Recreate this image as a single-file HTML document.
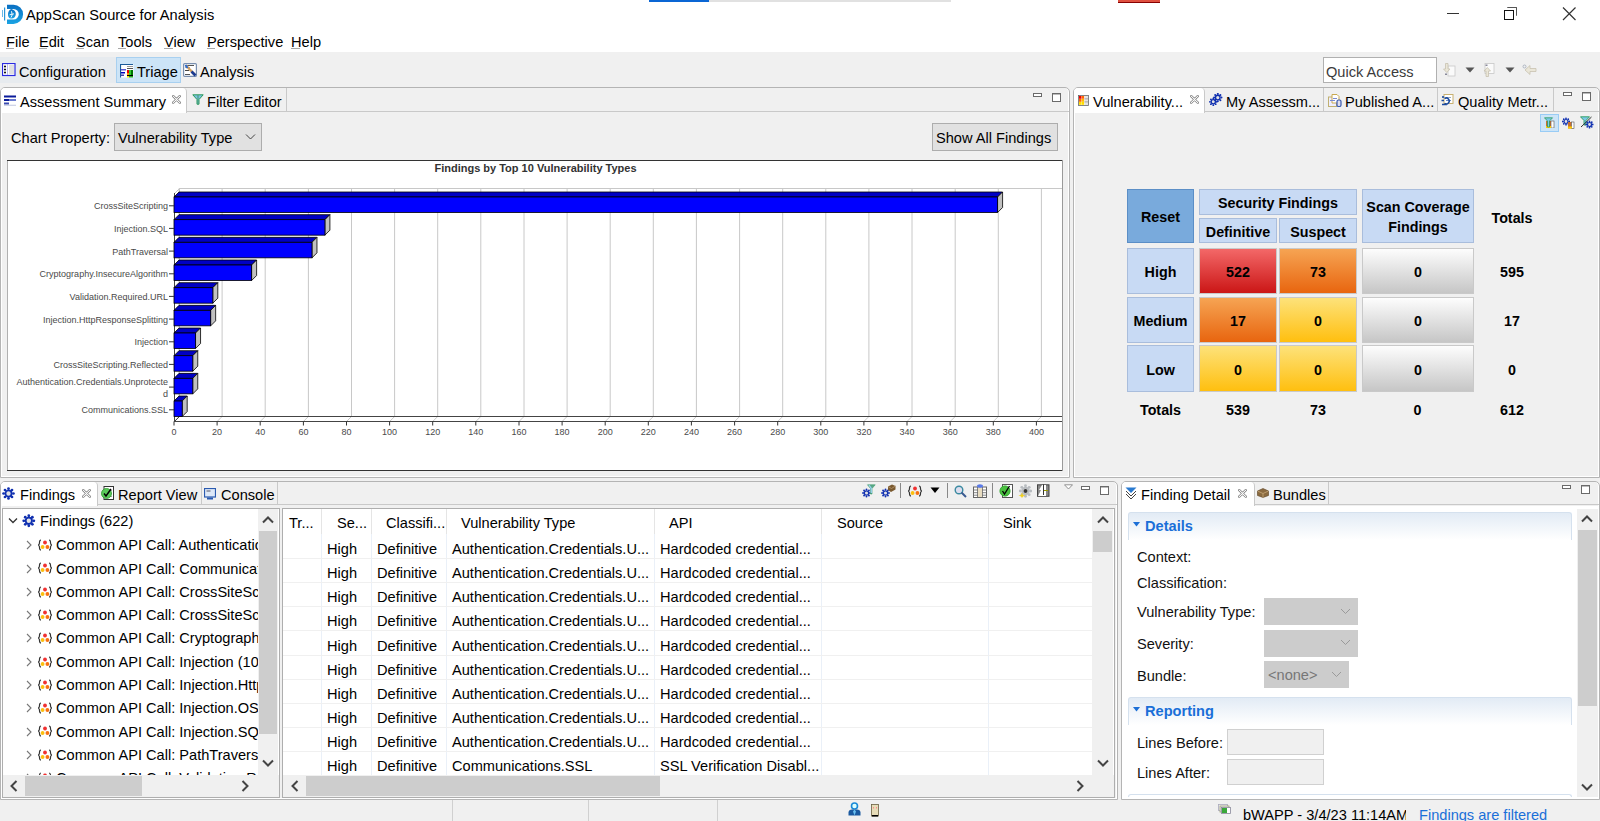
<!DOCTYPE html>
<html><head><meta charset="utf-8">
<style>
*{margin:0;padding:0;box-sizing:border-box}
html,body{width:1600px;height:821px;overflow:hidden;background:#f0f0f0;font-family:"Liberation Sans",sans-serif;font-size:14.6px;color:#000}
.a{position:absolute;white-space:nowrap}
.t{position:absolute;white-space:nowrap;line-height:18px}
.pan{position:absolute;border:1px solid #b4b4b4;border-radius:5px 5px 0 0;background:#f0f0f0;box-shadow:inset 1px 0 #fff,inset -1px 0 #fff,inset 0 -1px #fff}
.tabbar{position:absolute;left:0;right:0;top:0;height:24px;border-bottom:1px solid #c9c9c9}
.bt .tabbar{height:23px}
.bt .tab{height:23px}
.bt .tab.act{height:24px}
.bt .lbl{top:4px}
.tab{position:absolute;top:0;height:24px;border-right:1px solid #c9c9c9}
.tab.act{background:#fff;border-radius:4px 4px 0 0;height:25px}
.lbl{position:absolute;top:5px;white-space:nowrap;line-height:18px;font-size:14.6px}
.x{position:absolute;top:5px;font-size:12px;color:#9a9a9a}
.cell{position:absolute;border:1px solid #b8c6dc;text-align:center;font-weight:bold;font-size:14.3px;display:flex;align-items:center;justify-content:center;line-height:20px;padding-top:2px}
.hd{background:#c8daf4;border-color:#a9bddc}
.red{background:linear-gradient(#f36868,#cb1616);border-color:#c9c9c9}
.org{background:linear-gradient(#f6a453,#e8650f);border-color:#c9c9c9}
.yel{background:linear-gradient(#fde27a,#ffbf0f);border-color:#c9c9c9}
.gry{background:linear-gradient(#fdfdfd,#c6c6c6);border-color:#c9c9c9}
.tot{position:absolute;font-weight:bold;font-size:14.3px;text-align:center;line-height:20px;padding-top:1px}
.lab9{position:absolute;font-size:9px;color:#333;white-space:nowrap;line-height:10px}
.row{position:absolute;left:0;height:24px;border-bottom:1px solid #f0f0f0}
.tr{position:absolute;white-space:nowrap;font-size:14.6px;line-height:18px}
</style></head><body>

<!-- Title bar -->
<div class="a" style="left:0;top:0;width:1600px;height:52px;background:#fff"></div>
<div class="a" style="left:649px;top:0;width:60px;height:2px;background:#0a66d4"></div>
<div class="a" style="left:709px;top:0;width:242px;height:2px;background:#e1e1e1"></div>
<div class="a" style="left:1118px;top:0;width:42px;height:3px;background:#df5040;border-bottom:1px solid #800"></div>
<div class="t" style="left:26px;top:6px;font-size:14.6px;color:#000">AppScan Source for Analysis</div>
<div class="a" style="left:1447px;top:13px;width:12px;height:1px;background:#333"></div>
<div class="a" style="left:1507px;top:7px;width:10px;height:9px;border:1px solid #555;border-left:none;border-bottom:none;border-radius:1px"></div>
<div class="a" style="left:1504px;top:10px;width:10px;height:10px;border:1px solid #111;background:#fff"></div>
<svg class="a" style="left:1562px;top:7px" width="14" height="14" viewBox="0 0 14 14"><path d="M1 0.5 L13.5 13 M13.5 0.5 L1 13" stroke="#333" stroke-width="1.2"/></svg>

<!-- Menu -->
<div class="t" style="left:6px;top:32.7px">File</div>
<div class="t" style="left:39px;top:32.7px">Edit</div>
<div class="t" style="left:76px;top:32.7px">Scan</div>
<div class="t" style="left:118px;top:32.7px">Tools</div>
<div class="t" style="left:164px;top:32.7px">View</div>
<div class="t" style="left:207px;top:32.7px">Perspective</div>
<div class="t" style="left:291px;top:32.7px">Help</div>

<!-- Toolbar -->
<div class="a" style="left:0;top:57px;width:116px;height:26px;background:#e7ebef"></div>
<div class="a" style="left:116px;top:57px;width:65px;height:26px;background:#cce4f7;border:1px solid #a8d0f0"></div>
<div class="t" style="left:19px;top:63px">Configuration</div>
<div class="t" style="left:137px;top:63px">Triage</div>
<div class="t" style="left:200px;top:63px">Analysis</div>

<div class="a" style="left:1323px;top:57px;width:114px;height:26px;background:#fff;border:1px solid #b0b0b0"></div>
<div class="t" style="left:1326px;top:63px;color:#3b3b3b">Quick Access</div>

<!-- Top-left panel -->
<div class="pan" style="left:0;top:87px;width:1070px;height:391px">
 <div class="tabbar">
  <div class="tab act" style="left:0;width:186px"><div class="lbl" style="left:19px">Assessment Summary</div></div>
  <div class="tab" style="left:186px;width:100px"><div class="lbl" style="left:20px">Filter Editor</div></div>
 </div>
</div>

<!-- Top-right panel -->
<div class="pan" style="left:1073px;top:87px;width:527px;height:391px">
 <div class="tabbar">
  <div class="tab act" style="left:0;width:131px"><div class="lbl" style="left:19px">Vulnerability...</div></div>
  <div class="tab" style="left:131px;width:119px"><div class="lbl" style="left:21px">My Assessm...</div></div>
  <div class="tab" style="left:250px;width:114px"><div class="lbl" style="left:21px">Published A...</div></div>
  <div class="tab" style="left:364px;width:116px"><div class="lbl" style="left:20px">Quality Metr...</div></div>
 </div>
</div>

<!-- Bottom-left panel -->
<div class="pan bt" style="left:0;top:481px;width:1118px;height:319px">
 <div class="tabbar">
  <div class="tab act" style="left:0;width:97px"><div class="lbl" style="left:19px">Findings</div></div>
  <div class="tab" style="left:97px;width:104px"><div class="lbl" style="left:20px">Report View</div></div>
  <div class="tab" style="left:201px;width:76px"><div class="lbl" style="left:19px">Console</div></div>
 </div>
</div>

<!-- Bottom-right panel -->
<div class="pan bt" style="left:1121px;top:481px;width:479px;height:319px">
 <div class="tabbar">
  <div class="tab act" style="left:0;width:133px"><div class="lbl" style="left:19px">Finding Detail</div></div>
  <div class="tab" style="left:133px;width:74px"><div class="lbl" style="left:18px">Bundles</div></div>
 </div>
</div>

<svg class="a" style="left:0;top:0" width="1600" height="821" viewBox="0 0 1600 821">
<rect x="7" y="160" width="1056" height="311" fill="#fff"/>
<path d="M7.5 160.5V471" stroke="#b0b0b0" stroke-width="1"/>
<path d="M7 160.5H1063" stroke="#333" stroke-width="1"/>
<path d="M7 470.5H1063" stroke="#333" stroke-width="1"/>
<path d="M1062.5 160V471" stroke="#9a9a9a" stroke-width="1"/>
<text x="535.5" y="171.5" font-family="Liberation Sans" font-size="11" font-weight="bold" fill="#333" text-anchor="middle">Findings by Top 10 Vulnerability Types</text>
<path d="M179.0 188.5V416.5 M179.0 416.5L174.0 421.5 M222.1 188.5V416.5 M222.1 416.5L217.1 421.5 M265.2 188.5V416.5 M265.2 416.5L260.2 421.5 M308.4 188.5V416.5 M308.4 416.5L303.4 421.5 M351.5 188.5V416.5 M351.5 416.5L346.5 421.5 M394.6 188.5V416.5 M394.6 416.5L389.6 421.5 M437.7 188.5V416.5 M437.7 416.5L432.7 421.5 M480.8 188.5V416.5 M480.8 416.5L475.8 421.5 M524.0 188.5V416.5 M524.0 416.5L519.0 421.5 M567.1 188.5V416.5 M567.1 416.5L562.1 421.5 M610.2 188.5V416.5 M610.2 416.5L605.2 421.5 M653.3 188.5V416.5 M653.3 416.5L648.3 421.5 M696.4 188.5V416.5 M696.4 416.5L691.4 421.5 M739.6 188.5V416.5 M739.6 416.5L734.6 421.5 M782.7 188.5V416.5 M782.7 416.5L777.7 421.5 M825.8 188.5V416.5 M825.8 416.5L820.8 421.5 M868.9 188.5V416.5 M868.9 416.5L863.9 421.5 M912.0 188.5V416.5 M912.0 416.5L907.0 421.5 M955.2 188.5V416.5 M955.2 416.5L950.2 421.5 M998.3 188.5V416.5 M998.3 416.5L993.3 421.5 M1041.4 188.5V416.5 M1041.4 416.5L1036.4 421.5" stroke="#c8c8c8" stroke-width="1" fill="none"/>
<path d="M179 188.5H1062" stroke="#c8c8c8" stroke-width="1"/>
<path d="M179.5 188.5V416.5 M174.5 193.5L179.5 188.5" stroke="#c8c8c8" stroke-width="1" fill="none"/>
<path d="M179 416.5H1062 M174 421.5H1062 M174.5 193V422 M174.5 421.5L179.5 416.5" stroke="#444" stroke-width="1" fill="none"/>
<path d="M174.0 421.5V425.5 M217.1 421.5V425.5 M260.2 421.5V425.5 M303.4 421.5V425.5 M346.5 421.5V425.5 M389.6 421.5V425.5 M432.7 421.5V425.5 M475.8 421.5V425.5 M519.0 421.5V425.5 M562.1 421.5V425.5 M605.2 421.5V425.5 M648.3 421.5V425.5 M691.4 421.5V425.5 M734.6 421.5V425.5 M777.7 421.5V425.5 M820.8 421.5V425.5 M863.9 421.5V425.5 M907.0 421.5V425.5 M950.2 421.5V425.5 M993.3 421.5V425.5 M1036.4 421.5V425.5" stroke="#333" stroke-width="1"/>
<g font-family="Liberation Sans" font-size="9" fill="#4a4a4a"><text x="174.0" y="435" text-anchor="middle">0</text><text x="217.1" y="435" text-anchor="middle">20</text><text x="260.2" y="435" text-anchor="middle">40</text><text x="303.4" y="435" text-anchor="middle">60</text><text x="346.5" y="435" text-anchor="middle">80</text><text x="389.6" y="435" text-anchor="middle">100</text><text x="432.7" y="435" text-anchor="middle">120</text><text x="475.8" y="435" text-anchor="middle">140</text><text x="519.0" y="435" text-anchor="middle">160</text><text x="562.1" y="435" text-anchor="middle">180</text><text x="605.2" y="435" text-anchor="middle">200</text><text x="648.3" y="435" text-anchor="middle">220</text><text x="691.4" y="435" text-anchor="middle">240</text><text x="734.6" y="435" text-anchor="middle">260</text><text x="777.7" y="435" text-anchor="middle">280</text><text x="820.8" y="435" text-anchor="middle">300</text><text x="863.9" y="435" text-anchor="middle">320</text><text x="907.0" y="435" text-anchor="middle">340</text><text x="950.2" y="435" text-anchor="middle">360</text><text x="993.3" y="435" text-anchor="middle">380</text><text x="1036.4" y="435" text-anchor="middle">400</text></g>
<path d="M174 197.00L179 192.00H1002.59L997.59 197.00Z" fill="#0000c4" stroke="#000" stroke-width="0.8"/><path d="M997.59 197.00L1002.59 192.00V207.50L997.59 212.50Z" fill="#c0c0c0" stroke="#000" stroke-width="0.8"/><rect x="174" y="197.00" width="823.59" height="15.5" fill="#0000ff" stroke="#000" stroke-width="0.8"/><path d="M174 219.67L179 214.67H329.92L324.92 219.67Z" fill="#0000c4" stroke="#000" stroke-width="0.8"/><path d="M324.92 219.67L329.92 214.67V230.17L324.92 235.17Z" fill="#c0c0c0" stroke="#000" stroke-width="0.8"/><rect x="174" y="219.67" width="150.92" height="15.5" fill="#0000ff" stroke="#000" stroke-width="0.8"/><path d="M174 242.34L179 237.34H316.98L311.98 242.34Z" fill="#0000c4" stroke="#000" stroke-width="0.8"/><path d="M311.98 242.34L316.98 237.34V252.84L311.98 257.84Z" fill="#c0c0c0" stroke="#000" stroke-width="0.8"/><rect x="174" y="242.34" width="137.98" height="15.5" fill="#0000ff" stroke="#000" stroke-width="0.8"/><path d="M174 265.01L179 260.01H256.62L251.62 265.01Z" fill="#0000c4" stroke="#000" stroke-width="0.8"/><path d="M251.62 265.01L256.62 260.01V275.51L251.62 280.51Z" fill="#c0c0c0" stroke="#000" stroke-width="0.8"/><rect x="174" y="265.01" width="77.62" height="15.5" fill="#0000ff" stroke="#000" stroke-width="0.8"/><path d="M174 287.68L179 282.68H217.81L212.81 287.68Z" fill="#0000c4" stroke="#000" stroke-width="0.8"/><path d="M212.81 287.68L217.81 282.68V298.18L212.81 303.18Z" fill="#c0c0c0" stroke="#000" stroke-width="0.8"/><rect x="174" y="287.68" width="38.81" height="15.5" fill="#0000ff" stroke="#000" stroke-width="0.8"/><path d="M174 310.35L179 305.35H215.65L210.65 310.35Z" fill="#0000c4" stroke="#000" stroke-width="0.8"/><path d="M210.65 310.35L215.65 305.35V320.85L210.65 325.85Z" fill="#c0c0c0" stroke="#000" stroke-width="0.8"/><rect x="174" y="310.35" width="36.65" height="15.5" fill="#0000ff" stroke="#000" stroke-width="0.8"/><path d="M174 333.02L179 328.02H200.56L195.56 333.02Z" fill="#0000c4" stroke="#000" stroke-width="0.8"/><path d="M195.56 333.02L200.56 328.02V343.52L195.56 348.52Z" fill="#c0c0c0" stroke="#000" stroke-width="0.8"/><rect x="174" y="333.02" width="21.56" height="15.5" fill="#0000ff" stroke="#000" stroke-width="0.8"/><path d="M174 355.69L179 350.69H197.76L192.76 355.69Z" fill="#0000c4" stroke="#000" stroke-width="0.8"/><path d="M192.76 355.69L197.76 350.69V366.19L192.76 371.19Z" fill="#c0c0c0" stroke="#000" stroke-width="0.8"/><rect x="174" y="355.69" width="18.76" height="15.5" fill="#0000ff" stroke="#000" stroke-width="0.8"/><path d="M174 378.36L179 373.36H197.76L192.76 378.36Z" fill="#0000c4" stroke="#000" stroke-width="0.8"/><path d="M192.76 378.36L197.76 373.36V388.86L192.76 393.86Z" fill="#c0c0c0" stroke="#000" stroke-width="0.8"/><rect x="174" y="378.36" width="18.76" height="15.5" fill="#0000ff" stroke="#000" stroke-width="0.8"/><path d="M174 401.03L179 396.03H187.19L182.19 401.03Z" fill="#0000c4" stroke="#000" stroke-width="0.8"/><path d="M182.19 401.03L187.19 396.03V411.53L182.19 416.53Z" fill="#c0c0c0" stroke="#000" stroke-width="0.8"/><rect x="174" y="401.03" width="8.19" height="15.5" fill="#0000ff" stroke="#000" stroke-width="0.8"/>
<path d="M169 205.8H174 M169 228.4H174 M169 251.1H174 M169 273.8H174 M169 296.4H174 M169 319.1H174 M169 341.8H174 M169 364.4H174 M169 387.1H174 M169 409.8H174" stroke="#333" stroke-width="1"/>
<g font-family="Liberation Sans" font-size="9" fill="#4a4a4a"><text x="168" y="209.2" text-anchor="end">CrossSiteScripting</text><text x="168" y="231.9" text-anchor="end">Injection.SQL</text><text x="168" y="254.6" text-anchor="end">PathTraversal</text><text x="168" y="277.3" text-anchor="end">Cryptography.InsecureAlgorithm</text><text x="168" y="299.9" text-anchor="end">Validation.Required.URL</text><text x="168" y="322.6" text-anchor="end">Injection.HttpResponseSplitting</text><text x="168" y="345.3" text-anchor="end">Injection</text><text x="168" y="367.9" text-anchor="end">CrossSiteScripting.Reflected</text><text x="168" y="384.6" text-anchor="end">Authentication.Credentials.Unprotecte</text><text x="168" y="397.1" text-anchor="end">d</text><text x="168" y="413.3" text-anchor="end">Communications.SSL</text></g>
</svg>
<div class="t" style="left:11px;top:129px">Chart Property:</div>
<div class="a" style="left:114px;top:123px;width:148px;height:28px;background:#e1e1e1;border:1px solid #adadad"></div>
<div class="t" style="left:118px;top:129px">Vulnerability Type</div>
<svg class="a" style="left:245px;top:133px" width="11" height="8"><path d="M1 1.5L5.5 6L10 1.5" stroke="#444" stroke-width="1" fill="none"/></svg>
<div class="a" style="left:932px;top:123px;width:126px;height:28px;background:#e1e1e1;border:1px solid #adadad"></div>
<div class="t" style="left:936px;top:129px">Show All Findings</div>
<div class="a" style="left:1033px;top:93px;width:9px;height:4px;border:1px solid #6a6a6a;background:#fff"></div>
<div class="a" style="left:1052px;top:93px;width:9px;height:9px;border:1px solid #6a6a6a;background:#fff;box-shadow:inset 0 1px 0 #bbb"></div>
<div class="a" style="left:1563px;top:92px;width:9px;height:4px;border:1px solid #6a6a6a;background:#fff"></div>
<div class="a" style="left:1582px;top:92px;width:9px;height:9px;border:1px solid #6a6a6a;background:#fff;box-shadow:inset 0 1px 0 #bbb"></div>
<div class="a" style="left:1081px;top:486px;width:9px;height:4px;border:1px solid #6a6a6a;background:#fff"></div>
<div class="a" style="left:1100px;top:486px;width:9px;height:9px;border:1px solid #6a6a6a;background:#fff;box-shadow:inset 0 1px 0 #bbb"></div>
<div class="a" style="left:1562px;top:485px;width:9px;height:4px;border:1px solid #6a6a6a;background:#fff"></div>
<div class="a" style="left:1581px;top:485px;width:9px;height:9px;border:1px solid #6a6a6a;background:#fff;box-shadow:inset 0 1px 0 #bbb"></div>
<div class="cell hd" style="left:1127px;top:189px;width:67px;height:54px;background:#79aadc;border-color:#5b8ec6">Reset</div>
<div class="cell hd" style="left:1199px;top:189px;width:158px;height:26px;">Security Findings</div>
<div class="cell hd" style="left:1199px;top:218px;width:78px;height:25px;">Definitive</div>
<div class="cell hd" style="left:1279px;top:218px;width:78px;height:25px;">Suspect</div>
<div class="cell hd" style="left:1362px;top:189px;width:112px;height:54px;">Scan Coverage<br>Findings</div>
<div class="tot" style="left:1472px;top:207px;width:80px">Totals</div>
<div class="cell hd" style="left:1127px;top:248px;width:67px;height:46px;">High</div>
<div class="cell red" style="left:1199px;top:248px;width:78px;height:46px;">522</div>
<div class="cell org" style="left:1279px;top:248px;width:78px;height:46px;">73</div>
<div class="cell gry" style="left:1362px;top:248px;width:112px;height:46px;">0</div>
<div class="tot" style="left:1472px;top:261.0px;width:80px">595</div>
<div class="cell hd" style="left:1127px;top:297px;width:67px;height:46px;">Medium</div>
<div class="cell org" style="left:1199px;top:297px;width:78px;height:46px;">17</div>
<div class="cell yel" style="left:1279px;top:297px;width:78px;height:46px;">0</div>
<div class="cell gry" style="left:1362px;top:297px;width:112px;height:46px;">0</div>
<div class="tot" style="left:1472px;top:310.0px;width:80px">17</div>
<div class="cell hd" style="left:1127px;top:345px;width:67px;height:47px;">Low</div>
<div class="cell yel" style="left:1199px;top:345px;width:78px;height:47px;">0</div>
<div class="cell yel" style="left:1279px;top:345px;width:78px;height:47px;">0</div>
<div class="cell gry" style="left:1362px;top:345px;width:112px;height:47px;">0</div>
<div class="tot" style="left:1472px;top:358.5px;width:80px">0</div>
<div class="tot" style="left:1127px;top:399px;width:67px">Totals</div>
<div class="tot" style="left:1199px;top:399px;width:78px">539</div>
<div class="tot" style="left:1279px;top:399px;width:78px">73</div>
<div class="tot" style="left:1361px;top:399px;width:113px">0</div>
<div class="tot" style="left:1472px;top:399px;width:80px">612</div>
<div class="a" style="left:2px;top:508px;width:278px;height:290px;background:#fff;border:1px solid #aeaeae"></div>
<div class="a" style="left:258px;top:509px;width:20px;height:266px;background:#f0f0f0"></div>
<div class="a" style="left:259px;top:531px;width:18px;height:203px;background:#cdcdcd"></div>
<div class="a" style="left:3px;top:775px;width:276px;height:22px;background:#f0f0f0"></div>
<div class="a" style="left:25px;top:776px;width:117px;height:20px;background:#cdcdcd"></div>
<svg class="a" style="left:262px;top:516px" width="12" height="8"><path d="M1 6.5L6 1.5L11 6.5" stroke="#444" stroke-width="2" fill="none"/></svg>
<svg class="a" style="left:262px;top:759px" width="12" height="8"><path d="M1 1.5L6 6.5L11 1.5" stroke="#444" stroke-width="2" fill="none"/></svg>
<svg class="a" style="left:10px;top:780px" width="8" height="12"><path d="M6.5 1L1.5 6L6.5 11" stroke="#444" stroke-width="2" fill="none"/></svg>
<svg class="a" style="left:241px;top:780px" width="8" height="12"><path d="M1.5 1L6.5 6L1.5 11" stroke="#444" stroke-width="2" fill="none"/></svg>
<div class="a" style="left:3px;top:509px;width:255px;height:266px;overflow:hidden">
<svg class="a" style="left:5px;top:8px" width="10" height="8"><path d="M1 1.5L5 5.5L9 1.5" stroke="#333" stroke-width="1.3" fill="none"/></svg>
<div class="tr" style="left:37px;top:3px">Findings (622)</div>
<svg class="a" style="left:23px;top:31.2px" width="6" height="10"><path d="M1 1L5 5L1 9" stroke="#777" stroke-width="1.1" fill="none"/></svg>
<div class="tr" style="left:53px;top:27.2px">Common API Call: Authentication.Credentials.Unprotected</div>
<svg class="a" style="left:23px;top:54.5px" width="6" height="10"><path d="M1 1L5 5L1 9" stroke="#777" stroke-width="1.1" fill="none"/></svg>
<div class="tr" style="left:53px;top:50.5px">Common API Call: Communications.SSL</div>
<svg class="a" style="left:23px;top:77.8px" width="6" height="10"><path d="M1 1L5 5L1 9" stroke="#777" stroke-width="1.1" fill="none"/></svg>
<div class="tr" style="left:53px;top:73.8px">Common API Call: CrossSiteScripting</div>
<svg class="a" style="left:23px;top:101.1px" width="6" height="10"><path d="M1 1L5 5L1 9" stroke="#777" stroke-width="1.1" fill="none"/></svg>
<div class="tr" style="left:53px;top:97.1px">Common API Call: CrossSiteScripting.Reflected</div>
<svg class="a" style="left:23px;top:124.4px" width="6" height="10"><path d="M1 1L5 5L1 9" stroke="#777" stroke-width="1.1" fill="none"/></svg>
<div class="tr" style="left:53px;top:120.4px">Common API Call: Cryptography.InsecureAlgorithm</div>
<svg class="a" style="left:23px;top:147.7px" width="6" height="10"><path d="M1 1L5 5L1 9" stroke="#777" stroke-width="1.1" fill="none"/></svg>
<div class="tr" style="left:53px;top:143.7px">Common API Call: Injection (10)</div>
<svg class="a" style="left:23px;top:171.0px" width="6" height="10"><path d="M1 1L5 5L1 9" stroke="#777" stroke-width="1.1" fill="none"/></svg>
<div class="tr" style="left:53px;top:167.0px">Common API Call: Injection.HttpResponseSplitting</div>
<svg class="a" style="left:23px;top:194.3px" width="6" height="10"><path d="M1 1L5 5L1 9" stroke="#777" stroke-width="1.1" fill="none"/></svg>
<div class="tr" style="left:53px;top:190.3px">Common API Call: Injection.OSCommand</div>
<svg class="a" style="left:23px;top:217.6px" width="6" height="10"><path d="M1 1L5 5L1 9" stroke="#777" stroke-width="1.1" fill="none"/></svg>
<div class="tr" style="left:53px;top:213.6px">Common API Call: Injection.SQL</div>
<svg class="a" style="left:23px;top:240.9px" width="6" height="10"><path d="M1 1L5 5L1 9" stroke="#777" stroke-width="1.1" fill="none"/></svg>
<div class="tr" style="left:53px;top:236.9px">Common API Call: PathTraversal</div>
<svg class="a" style="left:23px;top:264.2px" width="6" height="10"><path d="M1 1L5 5L1 9" stroke="#777" stroke-width="1.1" fill="none"/></svg>
<div class="tr" style="left:53px;top:260.2px">Common API Call: Validation.Required.URL</div>
</div>
<div class="a" style="left:282px;top:508px;width:833px;height:290px;background:#fff;border:1px solid #aeaeae"></div>
<div class="a" style="left:283px;top:509px;width:831px;height:288px;overflow:hidden">
<div class="a" style="left:38px;top:0;width:1px;height:25px;background:#e5e5e5"></div>
<div class="a" style="left:38px;top:25px;width:1px;height:241px;background:#eaf0f8"></div>
<div class="a" style="left:88px;top:0;width:1px;height:25px;background:#e5e5e5"></div>
<div class="a" style="left:88px;top:25px;width:1px;height:241px;background:#eaf0f8"></div>
<div class="a" style="left:163px;top:0;width:1px;height:25px;background:#e5e5e5"></div>
<div class="a" style="left:163px;top:25px;width:1px;height:241px;background:#eaf0f8"></div>
<div class="a" style="left:371px;top:0;width:1px;height:25px;background:#e5e5e5"></div>
<div class="a" style="left:371px;top:25px;width:1px;height:241px;background:#eaf0f8"></div>
<div class="a" style="left:538px;top:0;width:1px;height:25px;background:#e5e5e5"></div>
<div class="a" style="left:538px;top:25px;width:1px;height:241px;background:#eaf0f8"></div>
<div class="a" style="left:705px;top:0;width:1px;height:25px;background:#e5e5e5"></div>
<div class="a" style="left:705px;top:25px;width:1px;height:241px;background:#eaf0f8"></div>
<div class="a" style="left:0;top:49.0px;width:809px;height:1px;background:#f0f0f0"></div>
<div class="a" style="left:0;top:73.2px;width:809px;height:1px;background:#f0f0f0"></div>
<div class="a" style="left:0;top:97.3px;width:809px;height:1px;background:#f0f0f0"></div>
<div class="a" style="left:0;top:121.4px;width:809px;height:1px;background:#f0f0f0"></div>
<div class="a" style="left:0;top:145.6px;width:809px;height:1px;background:#f0f0f0"></div>
<div class="a" style="left:0;top:169.8px;width:809px;height:1px;background:#f0f0f0"></div>
<div class="a" style="left:0;top:193.9px;width:809px;height:1px;background:#f0f0f0"></div>
<div class="a" style="left:0;top:218.0px;width:809px;height:1px;background:#f0f0f0"></div>
<div class="a" style="left:0;top:242.2px;width:809px;height:1px;background:#f0f0f0"></div>
<div class="a" style="left:0;top:266.4px;width:809px;height:1px;background:#f0f0f0"></div>
<div class="a" style="left:0;top:290.5px;width:809px;height:1px;background:#f0f0f0"></div>
<div class="tr" style="left:6px;top:5px">Tr...</div>
<div class="tr" style="left:54px;top:5px">Se...</div>
<div class="tr" style="left:103px;top:5px">Classifi...</div>
<div class="tr" style="left:178px;top:5px">Vulnerability Type</div>
<div class="tr" style="left:386px;top:5px">API</div>
<div class="tr" style="left:554px;top:5px">Source</div>
<div class="tr" style="left:720px;top:5px">Sink</div>
<div class="tr" style="left:44px;top:31.0px">High</div>
<div class="tr" style="left:94px;top:31.0px">Definitive</div>
<div class="tr" style="left:169px;top:31.0px">Authentication.Credentials.U...</div>
<div class="tr" style="left:377px;top:31.0px">Hardcoded credential...</div>
<div class="tr" style="left:44px;top:55.1px">High</div>
<div class="tr" style="left:94px;top:55.1px">Definitive</div>
<div class="tr" style="left:169px;top:55.1px">Authentication.Credentials.U...</div>
<div class="tr" style="left:377px;top:55.1px">Hardcoded credential...</div>
<div class="tr" style="left:44px;top:79.3px">High</div>
<div class="tr" style="left:94px;top:79.3px">Definitive</div>
<div class="tr" style="left:169px;top:79.3px">Authentication.Credentials.U...</div>
<div class="tr" style="left:377px;top:79.3px">Hardcoded credential...</div>
<div class="tr" style="left:44px;top:103.4px">High</div>
<div class="tr" style="left:94px;top:103.4px">Definitive</div>
<div class="tr" style="left:169px;top:103.4px">Authentication.Credentials.U...</div>
<div class="tr" style="left:377px;top:103.4px">Hardcoded credential...</div>
<div class="tr" style="left:44px;top:127.6px">High</div>
<div class="tr" style="left:94px;top:127.6px">Definitive</div>
<div class="tr" style="left:169px;top:127.6px">Authentication.Credentials.U...</div>
<div class="tr" style="left:377px;top:127.6px">Hardcoded credential...</div>
<div class="tr" style="left:44px;top:151.8px">High</div>
<div class="tr" style="left:94px;top:151.8px">Definitive</div>
<div class="tr" style="left:169px;top:151.8px">Authentication.Credentials.U...</div>
<div class="tr" style="left:377px;top:151.8px">Hardcoded credential...</div>
<div class="tr" style="left:44px;top:175.9px">High</div>
<div class="tr" style="left:94px;top:175.9px">Definitive</div>
<div class="tr" style="left:169px;top:175.9px">Authentication.Credentials.U...</div>
<div class="tr" style="left:377px;top:175.9px">Hardcoded credential...</div>
<div class="tr" style="left:44px;top:200.0px">High</div>
<div class="tr" style="left:94px;top:200.0px">Definitive</div>
<div class="tr" style="left:169px;top:200.0px">Authentication.Credentials.U...</div>
<div class="tr" style="left:377px;top:200.0px">Hardcoded credential...</div>
<div class="tr" style="left:44px;top:224.2px">High</div>
<div class="tr" style="left:94px;top:224.2px">Definitive</div>
<div class="tr" style="left:169px;top:224.2px">Authentication.Credentials.U...</div>
<div class="tr" style="left:377px;top:224.2px">Hardcoded credential...</div>
<div class="tr" style="left:44px;top:248.3px">High</div>
<div class="tr" style="left:94px;top:248.3px">Definitive</div>
<div class="tr" style="left:169px;top:248.3px">Communications.SSL</div>
<div class="tr" style="left:377px;top:248.3px">SSL Verification Disabl...</div>
</div>
<div class="a" style="left:1092px;top:509px;width:21px;height:266px;background:#f0f0f0"></div>
<div class="a" style="left:1093px;top:531px;width:19px;height:21px;background:#cdcdcd"></div>
<svg class="a" style="left:1097px;top:516px" width="12" height="8"><path d="M1 6.5L6 1.5L11 6.5" stroke="#444" stroke-width="2" fill="none"/></svg>
<svg class="a" style="left:1097px;top:759px" width="12" height="8"><path d="M1 1.5L6 6.5L11 1.5" stroke="#444" stroke-width="2" fill="none"/></svg>
<div class="a" style="left:283px;top:775px;width:831px;height:22px;background:#f0f0f0"></div>
<div class="a" style="left:306px;top:776px;width:354px;height:20px;background:#cdcdcd"></div>
<svg class="a" style="left:291px;top:780px" width="8" height="12"><path d="M6.5 1L1.5 6L6.5 11" stroke="#444" stroke-width="2" fill="none"/></svg>
<svg class="a" style="left:1076px;top:780px" width="8" height="12"><path d="M1.5 1L6.5 6L1.5 11" stroke="#444" stroke-width="2" fill="none"/></svg>
<div class="a" style="left:1122px;top:506px;width:477px;height:292px;background:#fff"></div>
<div class="a" style="left:1577px;top:509px;width:21px;height:288px;background:#f0f0f0"></div>
<div class="a" style="left:1578px;top:530px;width:19px;height:176px;background:#cdcdcd"></div>
<svg class="a" style="left:1581px;top:515px" width="12" height="8"><path d="M1 6.5L6 1.5L11 6.5" stroke="#444" stroke-width="2" fill="none"/></svg>
<svg class="a" style="left:1581px;top:783px" width="12" height="8"><path d="M1 1.5L6 6.5L11 1.5" stroke="#444" stroke-width="2" fill="none"/></svg>
<div class="a" style="left:1128px;top:512px;width:444px;height:28px;border:1px solid #d5e1ee;border-bottom:none;border-radius:3px 3px 0 0;background:linear-gradient(#e2ebf5,#fff)"></div>
<svg class="a" style="left:1133px;top:522px" width="8" height="6"><path d="M0 0H7L3.5 4.5Z" fill="#1c6fd6"/></svg>
<div class="tr" style="left:1145px;top:517px;color:#1a6fd8;font-weight:bold">Details</div>
<div class="tr" style="left:1137px;top:548px;color:#111">Context:</div>
<div class="tr" style="left:1137px;top:574px;color:#111">Classification:</div>
<div class="tr" style="left:1137px;top:603px;color:#111">Vulnerability Type:</div>
<div class="tr" style="left:1137px;top:635px;color:#111">Severity:</div>
<div class="tr" style="left:1137px;top:667px;color:#111">Bundle:</div>
<div class="a" style="left:1264px;top:598px;width:94px;height:27px;background:#cccccc"></div>
<div class="a" style="left:1264px;top:630px;width:94px;height:27px;background:#cccccc"></div>
<div class="a" style="left:1264px;top:661px;width:85px;height:27px;background:#cccccc"></div>
<div class="tr" style="left:1268px;top:666px;color:#777">&lt;none&gt;</div>
<svg class="a" style="left:1340px;top:608px" width="11" height="7"><path d="M1 1L5.5 5.5L10 1" stroke="#9a9a9a" stroke-width="1" fill="none"/></svg>
<svg class="a" style="left:1340px;top:639px" width="11" height="7"><path d="M1 1L5.5 5.5L10 1" stroke="#9a9a9a" stroke-width="1" fill="none"/></svg>
<svg class="a" style="left:1331px;top:671px" width="11" height="7"><path d="M1 1L5.5 5.5L10 1" stroke="#9a9a9a" stroke-width="1" fill="none"/></svg>
<div class="a" style="left:1128px;top:697px;width:444px;height:28px;border:1px solid #d5e1ee;border-bottom:none;border-radius:3px 3px 0 0;background:linear-gradient(#e2ebf5,#fff)"></div>
<svg class="a" style="left:1133px;top:707px" width="8" height="6"><path d="M0 0H7L3.5 4.5Z" fill="#1c6fd6"/></svg>
<div class="tr" style="left:1145px;top:702px;color:#1a6fd8;font-weight:bold">Reporting</div>
<div class="tr" style="left:1137px;top:734px;color:#111">Lines Before:</div>
<div class="tr" style="left:1137px;top:764px;color:#111">Lines After:</div>
<div class="a" style="left:1227px;top:729px;width:97px;height:26px;background:#f0f0f0;border:1px solid #d0d0d0"></div>
<div class="a" style="left:1227px;top:759px;width:97px;height:26px;background:#f0f0f0;border:1px solid #d0d0d0"></div>
<div class="a" style="left:1128px;top:794px;width:444px;height:3px;border:1px solid #d5e1ee;border-bottom:none;border-radius:3px 3px 0 0"></div>
<div class="a" style="left:452px;top:800px;width:1px;height:21px;background:#d0d0d0"></div>
<div class="a" style="left:588px;top:800px;width:1px;height:21px;background:#d0d0d0"></div>
<div class="a" style="left:717px;top:800px;width:1px;height:21px;background:#d0d0d0"></div>
<div class="t" style="left:1243px;top:806px;width:163px;overflow:hidden">bWAPP - 3/4/23 11:14AM</div>
<div class="t" style="left:1419px;top:806px;color:#1a6fd8">Findings are filtered</div>
<div class="a" style="left:6px;top:48px;width:8px;height:1px;background:#a8a8a8"></div>
<div class="a" style="left:39px;top:48px;width:8px;height:1px;background:#a8a8a8"></div>
<div class="a" style="left:76px;top:48px;width:8px;height:1px;background:#a8a8a8"></div>
<div class="a" style="left:118px;top:48px;width:8px;height:1px;background:#a8a8a8"></div>
<div class="a" style="left:164px;top:48px;width:9px;height:1px;background:#a8a8a8"></div>
<div class="a" style="left:207px;top:48px;width:8px;height:1px;background:#a8a8a8"></div>
<div class="a" style="left:291px;top:48px;width:9px;height:1px;background:#a8a8a8"></div><svg class="a" style="left:0px;top:2px" width="24" height="24" viewBox="0 0 24 24"><defs><linearGradient id="lg" x1="0" y1="0" x2="0" y2="1"><stop offset="0" stop-color="#0a6fc2"/><stop offset="1" stop-color="#1aa3e3"/></linearGradient></defs><path fill="url(#lg)" fill-rule="evenodd" d="M7 2.7H13.5A9.6 9.6 0 0 1 13.5 21.9H7V17.6H13.5A5.3 5.3 0 0 0 13.5 7H7Z"/><path fill="url(#lg)" d="M11.2 7C14 7.6 16 9.5 15.8 12.2 15.6 15 13.5 16.8 11.2 16.6 9 16.4 7.8 14.5 8 12 8.2 9.5 9.5 7.8 11.2 7Z"/><path d="M11.5 9.2L12.2 13M9.6 12.8L14 11.8M12.2 13L11 15.5" stroke="#fff" stroke-width="0.9" fill="none"/><rect x="4" y="5.5" width="1.2" height="13" fill="#2a96d8"/><rect x="2" y="8" width="1" height="7" fill="#6ab8e8"/></svg>
<svg class="a" style="left:2px;top:63px" width="14" height="14" viewBox="0 0 14 14"><rect x="0.5" y="0.5" width="12.5" height="12" fill="#fff" stroke="#2a2ae0" stroke-width="1.2"/><rect x="5" y="1" width="1" height="11" fill="#b8b8f0"/><rect x="7" y="2" width="5" height="9" fill="#e0e0e0"/><circle cx="3" cy="3.5" r="1" fill="#000"/><path d="M1.8 6.5H4.2L3 5.3Z M1.8 6.5H4.2L3 7.7Z" fill="#000"/><circle cx="3" cy="9.5" r="1" fill="#000"/></svg>
<svg class="a" style="left:120px;top:64px" width="14" height="14" viewBox="0 0 14 14"><rect x="0.5" y="0.5" width="13" height="13" fill="#fff"/><path d="M0.5 13.5V0.5H13" stroke="#1a5a9a" stroke-width="1.2" fill="none"/><rect x="1" y="5" width="5" height="1.5" fill="#5a5ad0"/><rect x="1" y="8" width="4" height="1.5" fill="#0000c0"/><rect x="1" y="10.5" width="3" height="1.5" fill="#4040b0"/><rect x="7" y="2" width="6" height="1" fill="#999"/><rect x="7" y="4" width="6" height="1" fill="#555"/><rect x="7" y="6" width="2" height="3" fill="#e00"/><rect x="9" y="6" width="2" height="5" fill="#3c3"/><rect x="11" y="6" width="2" height="5" fill="#070"/><rect x="7" y="9" width="2" height="2" fill="#f80"/><rect x="7" y="11" width="6" height="1.2" fill="#000"/><rect x="7" y="12" width="2" height="1.5" fill="#ee0"/><rect x="9" y="12" width="4" height="1.5" fill="#2a2"/></svg>
<svg class="a" style="left:183px;top:63px" width="14" height="14" viewBox="0 0 14 14"><rect x="0.6" y="0.6" width="12.8" height="12.8" rx="1" fill="#fff" stroke="#7a90b0" stroke-width="1.2"/><rect x="2" y="2" width="9" height="1" fill="#555"/><rect x="2" y="7" width="4" height="1" fill="#444"/><rect x="2" y="11" width="5" height="1" fill="#555"/><rect x="2" y="4" width="5" height="1" fill="#aaa"/><path d="M3 2.5L12 12" stroke="#d0a060" stroke-width="2.4"/><path d="M8.5 8.5L12.5 12.5" stroke="#1a3a90" stroke-width="2.6"/><path d="M2.5 2L4.5 5" stroke="#2a6ad0" stroke-width="2"/></svg>
<svg class="a" style="left:172px;top:95px" width="10" height="9" viewBox="0 0 10 9"><path d="M1.2 1.2L4.5 4.3L7.8 1.2M1.2 7.6L4.5 4.5L7.8 7.6" stroke="#6e6e6e" stroke-width="2.3" fill="none" stroke-linecap="round"/><path d="M1.2 1.2L4.5 4.3L7.8 1.2M1.2 7.6L4.5 4.5L7.8 7.6" stroke="#fff" stroke-width="1.1" fill="none" stroke-linecap="round"/></svg>
<svg class="a" style="left:1190px;top:95px" width="10" height="9" viewBox="0 0 10 9"><path d="M1.2 1.2L4.5 4.3L7.8 1.2M1.2 7.6L4.5 4.5L7.8 7.6" stroke="#6e6e6e" stroke-width="2.3" fill="none" stroke-linecap="round"/><path d="M1.2 1.2L4.5 4.3L7.8 1.2M1.2 7.6L4.5 4.5L7.8 7.6" stroke="#fff" stroke-width="1.1" fill="none" stroke-linecap="round"/></svg>
<svg class="a" style="left:82px;top:489px" width="10" height="9" viewBox="0 0 10 9"><path d="M1.2 1.2L4.5 4.3L7.8 1.2M1.2 7.6L4.5 4.5L7.8 7.6" stroke="#6e6e6e" stroke-width="2.3" fill="none" stroke-linecap="round"/><path d="M1.2 1.2L4.5 4.3L7.8 1.2M1.2 7.6L4.5 4.5L7.8 7.6" stroke="#fff" stroke-width="1.1" fill="none" stroke-linecap="round"/></svg>
<svg class="a" style="left:1238px;top:489px" width="10" height="9" viewBox="0 0 10 9"><path d="M1.2 1.2L4.5 4.3L7.8 1.2M1.2 7.6L4.5 4.5L7.8 7.6" stroke="#6e6e6e" stroke-width="2.3" fill="none" stroke-linecap="round"/><path d="M1.2 1.2L4.5 4.3L7.8 1.2M1.2 7.6L4.5 4.5L7.8 7.6" stroke="#fff" stroke-width="1.1" fill="none" stroke-linecap="round"/></svg>
<svg class="a" style="left:3px;top:95px" width="14" height="11" viewBox="0 0 14 11"><rect x="1" y="0.5" width="12" height="2" fill="#0a1a9a"/><rect x="1" y="4" width="5" height="2" fill="#0a1a9a"/><rect x="6" y="4" width="7" height="2" fill="#6a7ad0"/><rect x="1" y="7.5" width="5" height="2" fill="#3a4ab0"/><rect x="1" y="9.8" width="12" height="0.8" fill="#b0b8d8"/></svg>
<svg class="a" style="left:192px;top:94px" width="12" height="11" viewBox="0 0 12 11"><path d="M0.8 0.8H11.2L7 5.5V10.2H5V5.5Z" fill="#7ac0e0" stroke="#2a9a5a" stroke-width="1" stroke-linejoin="round"/><path d="M6 1V10" stroke="#4aa080" stroke-width="1.2"/></svg>
<svg class="a" style="left:1078px;top:95px" width="11" height="11" viewBox="0 0 11 11"><rect x="0.5" y="0.5" width="10" height="10" fill="#fff" stroke="#666" stroke-width="0.8"/><rect x="1" y="1" width="2.5" height="2.8" fill="#e00"/><rect x="3.7" y="1" width="2.5" height="2.8" fill="#f60"/><rect x="1" y="4" width="2.5" height="2.8" fill="#f60"/><rect x="3.7" y="4" width="2.5" height="2.8" fill="#fb0"/><rect x="1" y="7" width="2.5" height="2.8" fill="#fd0"/><rect x="3.7" y="7" width="2.5" height="2.8" fill="#fd0"/><rect x="6.5" y="1" width="3.5" height="9" fill="#e4e4e4"/><path d="M6.5 3.9H10M6.5 6.9H10" stroke="#777" stroke-width="0.6"/></svg>
<svg class="a" style="left:1209px;top:93px" width="14" height="14" viewBox="0 0 14 14"><circle cx="7.66" cy="8.80" r="0.92" fill="#1030b0"/><circle cx="6.68" cy="11.18" r="0.92" fill="#1030b0"/><circle cx="4.30" cy="12.16" r="0.92" fill="#1030b0"/><circle cx="1.92" cy="11.18" r="0.92" fill="#1030b0"/><circle cx="0.94" cy="8.80" r="0.92" fill="#1030b0"/><circle cx="1.92" cy="6.42" r="0.92" fill="#1030b0"/><circle cx="4.30" cy="5.44" r="0.92" fill="#1030b0"/><circle cx="6.68" cy="6.42" r="0.92" fill="#1030b0"/><circle cx="4.3" cy="8.8" r="2.10" fill="#e4e4e4" stroke="#1030b0" stroke-width="1.26"/><circle cx="12.48" cy="4.60" r="1.01" fill="#1030b0"/><circle cx="11.40" cy="7.20" r="1.01" fill="#1030b0"/><circle cx="8.80" cy="8.28" r="1.01" fill="#1030b0"/><circle cx="6.20" cy="7.20" r="1.01" fill="#1030b0"/><circle cx="5.12" cy="4.60" r="1.01" fill="#1030b0"/><circle cx="6.20" cy="2.00" r="1.01" fill="#1030b0"/><circle cx="8.80" cy="0.92" r="1.01" fill="#1030b0"/><circle cx="11.40" cy="2.00" r="1.01" fill="#1030b0"/><circle cx="8.8" cy="4.6" r="2.30" fill="#e4e4e4" stroke="#1030b0" stroke-width="1.38"/></svg>
<svg class="a" style="left:1328px;top:94px" width="14" height="13" viewBox="0 0 14 13"><rect x="0.5" y="3" width="8" height="9.5" fill="#eef" stroke="#c0b070" stroke-width="1"/><path d="M4 0.5H9L11 2.5V9H4Z" fill="#fff" stroke="#c8a850" stroke-width="1"/><rect x="5" y="4" width="4" height="1" fill="#7a8ad0"/><rect x="2" y="6" width="5" height="1" fill="#7a8ad0"/><rect x="9" y="6" width="4" height="6.5" rx="1.5" fill="#dde" stroke="#3a5ab0" stroke-width="1.2"/></svg>
<svg class="a" style="left:1441px;top:94px" width="13" height="12" viewBox="0 0 13 12"><rect x="3" y="0.5" width="9" height="9" fill="#fff" stroke="#c8b070" stroke-width="1"/><rect x="5" y="3" width="5" height="1" fill="#9ab"/><rect x="5" y="6" width="5" height="1" fill="#6a8ac0"/><path d="M2 2V4 M0.5 6.5H3 M1 10.5H6 M3.5 4.5A3 3 0 1 1 3.5 9.5" stroke="#1a4aa0" stroke-width="1.6" fill="none"/></svg>
<div class="a" style="left:1540px;top:114px;width:19px;height:18px;background:#cce4f7;border:1px solid #99ccf5"></div>
<svg class="a" style="left:1544px;top:117px" width="11" height="11" viewBox="0 0 11 11"><rect x="2" y="4" width="8" height="7" fill="#c87030"/><rect x="7" y="4" width="3" height="7" fill="#fff" stroke="#555" stroke-width="0.6"/><rect x="2" y="9" width="5" height="2" fill="#fc0"/><path d="M0.5 0.8H8.5L5.5 4V10H3.5V4Z" fill="#7ac8e8" stroke="#2a9a5a" stroke-width="0.8"/></svg>
<svg class="a" style="left:1562px;top:117px" width="13" height="12" viewBox="0 0 13 12"><circle cx="7.20" cy="4.50" r="0.88" fill="#1030b0"/><circle cx="6.26" cy="6.76" r="0.88" fill="#1030b0"/><circle cx="4.00" cy="7.70" r="0.88" fill="#1030b0"/><circle cx="1.74" cy="6.76" r="0.88" fill="#1030b0"/><circle cx="0.80" cy="4.50" r="0.88" fill="#1030b0"/><circle cx="1.74" cy="2.24" r="0.88" fill="#1030b0"/><circle cx="4.00" cy="1.30" r="0.88" fill="#1030b0"/><circle cx="6.26" cy="2.24" r="0.88" fill="#1030b0"/><circle cx="4" cy="4.5" r="2.00" fill="#e4e4e4" stroke="#1030b0" stroke-width="1.20"/><rect x="6" y="5" width="6" height="6.5" fill="#c87030"/><rect x="9.5" y="5" width="2.5" height="6.5" fill="#fff" stroke="#555" stroke-width="0.6"/><rect x="6" y="9.5" width="4" height="2" fill="#fc0"/></svg>
<svg class="a" style="left:1580px;top:116px" width="15" height="13" viewBox="0 0 15 13"><path d="M0.5 0.8H9.5L6 4.5V9H4V4.5Z" fill="#7ac8e8" stroke="#2a9a5a" stroke-width="0.9"/><path d="M1 11L11.5 1" stroke="#333" stroke-width="1"/><circle cx="12.70" cy="8.50" r="0.88" fill="#1030b0"/><circle cx="11.76" cy="10.76" r="0.88" fill="#1030b0"/><circle cx="9.50" cy="11.70" r="0.88" fill="#1030b0"/><circle cx="7.24" cy="10.76" r="0.88" fill="#1030b0"/><circle cx="6.30" cy="8.50" r="0.88" fill="#1030b0"/><circle cx="7.24" cy="6.24" r="0.88" fill="#1030b0"/><circle cx="9.50" cy="5.30" r="0.88" fill="#1030b0"/><circle cx="11.76" cy="6.24" r="0.88" fill="#1030b0"/><circle cx="9.5" cy="8.5" r="2.00" fill="#e4e4e4" stroke="#1030b0" stroke-width="1.20"/></svg>
<svg class="a" style="left:1443px;top:63px" width="13" height="14" viewBox="0 0 13 14"><rect x="5" y="3" width="7" height="10" fill="#fafafa" stroke="#c8c8c8" stroke-width="0.8"/><rect x="2" y="10.5" width="2" height="1.5" fill="#889"/><path d="M2.5 0.5H5V6H7L3.8 9.5 0.5 6H2.5Z" fill="#eae6d8" stroke="#c8c2b0" stroke-width="0.8"/></svg>
<svg class="a" style="left:1465px;top:67px" width="10" height="6" viewBox="0 0 10 6"><path d="M0.5 0.5H9.5L5 5.5Z" fill="#555"/></svg>
<svg class="a" style="left:1483px;top:63px" width="13" height="14" viewBox="0 0 13 14"><rect x="2" y="0.5" width="9" height="10" fill="#fafafa" stroke="#c8c8c8" stroke-width="0.8"/><rect x="2.5" y="1.5" width="2" height="1.5" fill="#889"/><path d="M3 13.5V8H1L4.3 4.5 7.5 8H5.5V13.5Z" fill="#eae6d8" stroke="#c8c2b0" stroke-width="0.8"/></svg>
<svg class="a" style="left:1505px;top:67px" width="10" height="6" viewBox="0 0 10 6"><path d="M0.5 0.5H9.5L5 5.5Z" fill="#555"/></svg>
<svg class="a" style="left:1522px;top:64px" width="15" height="11" viewBox="0 0 15 11"><path d="M14 4.5V7.5H8V10.5L3 6 8 1.5V4.5Z" fill="#eae6d8" stroke="#c8c2b0" stroke-width="0.8" stroke-linejoin="round"/><circle cx="2.5" cy="2.5" r="1.5" fill="none" stroke="#a0a8b8" stroke-width="0.8"/></svg>
<svg class="a" style="left:2px;top:487px" width="13" height="13" viewBox="0 0 13 13"><circle cx="11.46" cy="6.50" r="1.36" fill="#1030b0"/><circle cx="10.01" cy="10.01" r="1.36" fill="#1030b0"/><circle cx="6.50" cy="11.46" r="1.36" fill="#1030b0"/><circle cx="2.99" cy="10.01" r="1.36" fill="#1030b0"/><circle cx="1.54" cy="6.50" r="1.36" fill="#1030b0"/><circle cx="2.99" cy="2.99" r="1.36" fill="#1030b0"/><circle cx="6.50" cy="1.54" r="1.36" fill="#1030b0"/><circle cx="10.01" cy="2.99" r="1.36" fill="#1030b0"/><circle cx="6.5" cy="6.5" r="3.10" fill="#e4e4e4" stroke="#1030b0" stroke-width="1.86"/></svg>
<svg class="a" style="left:101px;top:486px" width="13" height="14" viewBox="0 0 13 14"><rect x="3" y="0.5" width="9.5" height="13" fill="#fff" stroke="#333" stroke-width="1"/><rect x="8" y="4" width="3" height="0.8" fill="#888"/><rect x="8" y="7" width="3" height="0.8" fill="#888"/><rect x="8" y="10" width="3" height="0.8" fill="#888"/><circle cx="5.5" cy="7.5" r="5" fill="#5ac85a" stroke="#2a9a2a" stroke-width="0.8"/><path d="M3 7.5L5 10L10 3" stroke="#000" stroke-width="1.4" fill="none"/></svg>
<svg class="a" style="left:204px;top:488px" width="12" height="12" viewBox="0 0 12 12"><rect x="0.5" y="0.5" width="11" height="8.5" fill="#dde8f8" stroke="#2a5ab0" stroke-width="1.2"/><rect x="2.5" y="2.5" width="4" height="1" fill="#556"/><rect x="3" y="9.5" width="6" height="2" fill="#2a5ab0"/></svg>
<svg class="a" style="left:1125px;top:487px" width="12" height="13" viewBox="0 0 12 13"><path d="M0.5 0.5H11.5L6 6Z" fill="#2a7ad0"/><path d="M1 4L6 9L11 4 M1 7L6 12L11 7" stroke="#444" stroke-width="1" fill="none"/></svg>
<svg class="a" style="left:1257px;top:488px" width="12" height="10" viewBox="0 0 12 10"><path d="M0.5 3L6 0.5 11.5 3V7.5L6 9.5 0.5 7.5Z" fill="#8a6a40" stroke="#5a4020" stroke-width="0.6"/><path d="M0.5 3L6 5.5 11.5 3 M6 5.5V9.5" stroke="#c8a878" stroke-width="0.8" fill="none"/></svg>
<svg class="a" style="left:22px;top:514px" width="14" height="14" viewBox="0 0 14 14"><circle cx="11.84" cy="6.80" r="1.39" fill="#1030b0"/><circle cx="10.36" cy="10.36" r="1.39" fill="#1030b0"/><circle cx="6.80" cy="11.84" r="1.39" fill="#1030b0"/><circle cx="3.24" cy="10.36" r="1.39" fill="#1030b0"/><circle cx="1.76" cy="6.80" r="1.39" fill="#1030b0"/><circle cx="3.24" cy="3.24" r="1.39" fill="#1030b0"/><circle cx="6.80" cy="1.76" r="1.39" fill="#1030b0"/><circle cx="10.36" cy="3.24" r="1.39" fill="#1030b0"/><circle cx="6.8" cy="6.8" r="3.15" fill="#e4e4e4" stroke="#1030b0" stroke-width="1.89"/></svg>
<svg class="a" style="left:38px;top:539px" width="14" height="12" viewBox="0 0 14 12"><path d="M3 1C1.5 1 1.5 2 1.5 3.5S1.2 5.5 0.5 6C1.2 6.5 1.5 7 1.5 8.5S1.5 11 3 11 M11 1C12.5 1 12.5 2 12.5 3.5S12.8 5.5 13.5 6C12.8 6.5 12.5 7 12.5 8.5S12.5 11 11 11" stroke="#333" stroke-width="1.2" fill="none"/><circle cx="7" cy="3.5" r="1.9" fill="#f03030"/><circle cx="4.6" cy="8" r="1.9" fill="#fcc010"/><circle cx="9.4" cy="8" r="1.9" fill="#f87010"/></svg>
<svg class="a" style="left:38px;top:562px" width="14" height="12" viewBox="0 0 14 12"><path d="M3 1C1.5 1 1.5 2 1.5 3.5S1.2 5.5 0.5 6C1.2 6.5 1.5 7 1.5 8.5S1.5 11 3 11 M11 1C12.5 1 12.5 2 12.5 3.5S12.8 5.5 13.5 6C12.8 6.5 12.5 7 12.5 8.5S12.5 11 11 11" stroke="#333" stroke-width="1.2" fill="none"/><circle cx="7" cy="3.5" r="1.9" fill="#f03030"/><circle cx="4.6" cy="8" r="1.9" fill="#fcc010"/><circle cx="9.4" cy="8" r="1.9" fill="#f87010"/></svg>
<svg class="a" style="left:38px;top:586px" width="14" height="12" viewBox="0 0 14 12"><path d="M3 1C1.5 1 1.5 2 1.5 3.5S1.2 5.5 0.5 6C1.2 6.5 1.5 7 1.5 8.5S1.5 11 3 11 M11 1C12.5 1 12.5 2 12.5 3.5S12.8 5.5 13.5 6C12.8 6.5 12.5 7 12.5 8.5S12.5 11 11 11" stroke="#333" stroke-width="1.2" fill="none"/><circle cx="7" cy="3.5" r="1.9" fill="#f03030"/><circle cx="4.6" cy="8" r="1.9" fill="#fcc010"/><circle cx="9.4" cy="8" r="1.9" fill="#f87010"/></svg>
<svg class="a" style="left:38px;top:609px" width="14" height="12" viewBox="0 0 14 12"><path d="M3 1C1.5 1 1.5 2 1.5 3.5S1.2 5.5 0.5 6C1.2 6.5 1.5 7 1.5 8.5S1.5 11 3 11 M11 1C12.5 1 12.5 2 12.5 3.5S12.8 5.5 13.5 6C12.8 6.5 12.5 7 12.5 8.5S12.5 11 11 11" stroke="#333" stroke-width="1.2" fill="none"/><circle cx="7" cy="3.5" r="1.9" fill="#f03030"/><circle cx="4.6" cy="8" r="1.9" fill="#fcc010"/><circle cx="9.4" cy="8" r="1.9" fill="#f87010"/></svg>
<svg class="a" style="left:38px;top:632px" width="14" height="12" viewBox="0 0 14 12"><path d="M3 1C1.5 1 1.5 2 1.5 3.5S1.2 5.5 0.5 6C1.2 6.5 1.5 7 1.5 8.5S1.5 11 3 11 M11 1C12.5 1 12.5 2 12.5 3.5S12.8 5.5 13.5 6C12.8 6.5 12.5 7 12.5 8.5S12.5 11 11 11" stroke="#333" stroke-width="1.2" fill="none"/><circle cx="7" cy="3.5" r="1.9" fill="#f03030"/><circle cx="4.6" cy="8" r="1.9" fill="#fcc010"/><circle cx="9.4" cy="8" r="1.9" fill="#f87010"/></svg>
<svg class="a" style="left:38px;top:656px" width="14" height="12" viewBox="0 0 14 12"><path d="M3 1C1.5 1 1.5 2 1.5 3.5S1.2 5.5 0.5 6C1.2 6.5 1.5 7 1.5 8.5S1.5 11 3 11 M11 1C12.5 1 12.5 2 12.5 3.5S12.8 5.5 13.5 6C12.8 6.5 12.5 7 12.5 8.5S12.5 11 11 11" stroke="#333" stroke-width="1.2" fill="none"/><circle cx="7" cy="3.5" r="1.9" fill="#f03030"/><circle cx="4.6" cy="8" r="1.9" fill="#fcc010"/><circle cx="9.4" cy="8" r="1.9" fill="#f87010"/></svg>
<svg class="a" style="left:38px;top:679px" width="14" height="12" viewBox="0 0 14 12"><path d="M3 1C1.5 1 1.5 2 1.5 3.5S1.2 5.5 0.5 6C1.2 6.5 1.5 7 1.5 8.5S1.5 11 3 11 M11 1C12.5 1 12.5 2 12.5 3.5S12.8 5.5 13.5 6C12.8 6.5 12.5 7 12.5 8.5S12.5 11 11 11" stroke="#333" stroke-width="1.2" fill="none"/><circle cx="7" cy="3.5" r="1.9" fill="#f03030"/><circle cx="4.6" cy="8" r="1.9" fill="#fcc010"/><circle cx="9.4" cy="8" r="1.9" fill="#f87010"/></svg>
<svg class="a" style="left:38px;top:702px" width="14" height="12" viewBox="0 0 14 12"><path d="M3 1C1.5 1 1.5 2 1.5 3.5S1.2 5.5 0.5 6C1.2 6.5 1.5 7 1.5 8.5S1.5 11 3 11 M11 1C12.5 1 12.5 2 12.5 3.5S12.8 5.5 13.5 6C12.8 6.5 12.5 7 12.5 8.5S12.5 11 11 11" stroke="#333" stroke-width="1.2" fill="none"/><circle cx="7" cy="3.5" r="1.9" fill="#f03030"/><circle cx="4.6" cy="8" r="1.9" fill="#fcc010"/><circle cx="9.4" cy="8" r="1.9" fill="#f87010"/></svg>
<svg class="a" style="left:38px;top:725px" width="14" height="12" viewBox="0 0 14 12"><path d="M3 1C1.5 1 1.5 2 1.5 3.5S1.2 5.5 0.5 6C1.2 6.5 1.5 7 1.5 8.5S1.5 11 3 11 M11 1C12.5 1 12.5 2 12.5 3.5S12.8 5.5 13.5 6C12.8 6.5 12.5 7 12.5 8.5S12.5 11 11 11" stroke="#333" stroke-width="1.2" fill="none"/><circle cx="7" cy="3.5" r="1.9" fill="#f03030"/><circle cx="4.6" cy="8" r="1.9" fill="#fcc010"/><circle cx="9.4" cy="8" r="1.9" fill="#f87010"/></svg>
<svg class="a" style="left:38px;top:749px" width="14" height="12" viewBox="0 0 14 12"><path d="M3 1C1.5 1 1.5 2 1.5 3.5S1.2 5.5 0.5 6C1.2 6.5 1.5 7 1.5 8.5S1.5 11 3 11 M11 1C12.5 1 12.5 2 12.5 3.5S12.8 5.5 13.5 6C12.8 6.5 12.5 7 12.5 8.5S12.5 11 11 11" stroke="#333" stroke-width="1.2" fill="none"/><circle cx="7" cy="3.5" r="1.9" fill="#f03030"/><circle cx="4.6" cy="8" r="1.9" fill="#fcc010"/><circle cx="9.4" cy="8" r="1.9" fill="#f87010"/></svg>
<svg class="a" style="left:38px;top:772px" width="14" height="3" viewBox="0 0 14 3"><path d="M3 1C1.5 1 1.5 2 1.5 3.5S1.2 5.5 0.5 6C1.2 6.5 1.5 7 1.5 8.5S1.5 11 3 11 M11 1C12.5 1 12.5 2 12.5 3.5S12.8 5.5 13.5 6C12.8 6.5 12.5 7 12.5 8.5S12.5 11 11 11" stroke="#333" stroke-width="1.2" fill="none"/><circle cx="7" cy="3.5" r="1.9" fill="#f03030"/><circle cx="4.6" cy="8" r="1.9" fill="#fcc010"/><circle cx="9.4" cy="8" r="1.9" fill="#f87010"/></svg>
<svg class="a" style="left:862px;top:484px" width="14" height="14" viewBox="0 0 14 14"><circle cx="7.94" cy="9.00" r="0.95" fill="#1030b0"/><circle cx="6.93" cy="11.43" r="0.95" fill="#1030b0"/><circle cx="4.50" cy="12.44" r="0.95" fill="#1030b0"/><circle cx="2.07" cy="11.43" r="0.95" fill="#1030b0"/><circle cx="1.06" cy="9.00" r="0.95" fill="#1030b0"/><circle cx="2.07" cy="6.57" r="0.95" fill="#1030b0"/><circle cx="4.50" cy="5.56" r="0.95" fill="#1030b0"/><circle cx="6.93" cy="6.57" r="0.95" fill="#1030b0"/><circle cx="4.5" cy="9" r="2.15" fill="#e4e4e4" stroke="#1030b0" stroke-width="1.29"/><path d="M5.5 0.8H13.2L10 4.5V10H8.5V4.5Z" fill="#5aa888" stroke="#3a9a6a" stroke-width="0.6"/><path d="M7 1L9.3 4.5V9" stroke="#9ad0f0" stroke-width="1.3" fill="none"/></svg>
<svg class="a" style="left:881px;top:484px" width="15" height="14" viewBox="0 0 15 14"><circle cx="7.94" cy="9.00" r="0.95" fill="#1030b0"/><circle cx="6.93" cy="11.43" r="0.95" fill="#1030b0"/><circle cx="4.50" cy="12.44" r="0.95" fill="#1030b0"/><circle cx="2.07" cy="11.43" r="0.95" fill="#1030b0"/><circle cx="1.06" cy="9.00" r="0.95" fill="#1030b0"/><circle cx="2.07" cy="6.57" r="0.95" fill="#1030b0"/><circle cx="4.50" cy="5.56" r="0.95" fill="#1030b0"/><circle cx="6.93" cy="6.57" r="0.95" fill="#1030b0"/><circle cx="4.5" cy="9" r="2.15" fill="#e4e4e4" stroke="#1030b0" stroke-width="1.29"/><path d="M7 2.5L11 0.5 14.5 2V5.5L10 8 7 6Z" fill="#7a5a30"/><path d="M7 2.5L10.5 4.5 14.5 2" stroke="#b89870" stroke-width="0.8" fill="none"/></svg>
<div class="a" style="left:900px;top:483px;width:1px;height:15px;background:#888"></div>
<svg class="a" style="left:908px;top:485px" width="14" height="12" viewBox="0 0 14 12"><path d="M3 1C1.5 1 1.5 2 1.5 3.5S1.2 5.5 0.5 6C1.2 6.5 1.5 7 1.5 8.5S1.5 11 3 11 M11 1C12.5 1 12.5 2 12.5 3.5S12.8 5.5 13.5 6C12.8 6.5 12.5 7 12.5 8.5S12.5 11 11 11" stroke="#333" stroke-width="1.2" fill="none"/><circle cx="7" cy="3.5" r="1.9" fill="#f03030"/><circle cx="4.6" cy="8" r="1.9" fill="#fcc010"/><circle cx="9.4" cy="8" r="1.9" fill="#f87010"/></svg>
<svg class="a" style="left:930px;top:487px" width="10" height="7" viewBox="0 0 10 7"><path d="M0.5 0.5H9.5L5 6Z" fill="#000"/></svg>
<div class="a" style="left:947px;top:483px;width:1px;height:15px;background:#888"></div>
<svg class="a" style="left:954px;top:485px" width="13" height="13" viewBox="0 0 13 13"><circle cx="5" cy="5" r="3.8" fill="#dde" stroke="#3a8aa0" stroke-width="1.4"/><path d="M7.5 7.5L12 12" stroke="#3a5a90" stroke-width="2"/></svg>
<svg class="a" style="left:973px;top:484px" width="14" height="14" viewBox="0 0 14 14"><rect x="0.5" y="3" width="13" height="10.5" fill="#fff" stroke="#666" stroke-width="1"/><path d="M0.5 6H13.5M0.5 8.7H13.5M0.5 11.2H13.5M4.5 3V13.5M9.5 3V13.5" stroke="#666" stroke-width="0.8"/><rect x="5" y="3.5" width="4" height="9.5" fill="#e8dcc0"/><ellipse cx="7" cy="2" rx="3" ry="1.8" fill="#5a7ae8"/></svg>
<div class="a" style="left:992px;top:483px;width:1px;height:15px;background:#888"></div>
<svg class="a" style="left:999px;top:484px" width="14" height="14" viewBox="0 0 14 14"><rect x="3.5" y="0.5" width="10" height="13" fill="#fff" stroke="#555" stroke-width="1"/><circle cx="6" cy="7" r="5.2" fill="#4ac040" stroke="#1a9a1a" stroke-width="0.6"/><path d="M3.5 7L5.5 10L10.5 2" stroke="#000" stroke-width="1.3" fill="none"/></svg>
<svg class="a" style="left:1018px;top:484px" width="14" height="14" viewBox="0 0 14 14"><circle cx="12.70" cy="7.00" r="1.43" fill="#b8bcc0"/><circle cx="11.18" cy="10.68" r="1.43" fill="#b8bcc0"/><circle cx="7.50" cy="12.20" r="1.43" fill="#b8bcc0"/><circle cx="3.82" cy="10.68" r="1.43" fill="#b8bcc0"/><circle cx="2.30" cy="7.00" r="1.43" fill="#b8bcc0"/><circle cx="3.82" cy="3.32" r="1.43" fill="#b8bcc0"/><circle cx="7.50" cy="1.80" r="1.43" fill="#b8bcc0"/><circle cx="11.18" cy="3.32" r="1.43" fill="#b8bcc0"/><circle cx="7.5" cy="7" r="3.25" fill="#e4e4e4" stroke="#b8bcc0" stroke-width="1.95"/><circle cx="7.5" cy="7" r="2" fill="#333"/><path d="M4 8.5L5 11 7.5 11.5 5 12.5 4 14 3 12.5 0.5 11.5 3 11Z" fill="#f0d020"/></svg>
<svg class="a" style="left:1037px;top:484px" width="13" height="13" viewBox="0 0 13 13"><rect x="0.5" y="0.8" width="11.5" height="11.5" fill="#888" stroke="#444" stroke-width="1"/><path d="M1 12L4 6H2L5 1H9V12Z" fill="#fff"/><path d="M6.5 0.5V11" stroke="#000" stroke-width="0.8"/><rect x="7" y="6" width="4" height="1" fill="#990"/></svg>
<svg class="a" style="left:1064px;top:484px" width="9" height="6" viewBox="0 0 9 6"><path d="M0.5 0.8H8.5L4.5 5Z" fill="#fff" stroke="#888" stroke-width="0.9"/></svg>
<svg class="a" style="left:848px;top:802px" width="13" height="14" viewBox="0 0 13 14"><circle cx="6.5" cy="4" r="3" fill="#dff" stroke="#1a8ad8" stroke-width="1.6"/><path d="M0.5 13.5V10.5C0.5 8.5 2 7.5 4 7.5H9C11 7.5 12.5 8.5 12.5 10.5V13.5Z" fill="#1a5aa0"/><path d="M6.5 7.5L5 9.5 6.5 13.5 8 9.5Z" fill="#6ac0f0"/></svg>
<svg class="a" style="left:871px;top:804px" width="8" height="13" viewBox="0 0 8 13"><rect x="0.5" y="0.5" width="7" height="11.5" fill="#e6dcb8" stroke="#6a6040" stroke-width="0.8"/><rect x="2" y="3" width="1" height="1.5" fill="#f88"/><rect x="5" y="3" width="1" height="1.5" fill="#f88"/><rect x="1" y="11" width="6" height="1.5" fill="#000"/></svg>
<svg class="a" style="left:1218px;top:804px" width="13" height="10" viewBox="0 0 13 10"><rect x="0.5" y="0.5" width="9" height="6" fill="none" stroke="#aab" stroke-width="0.8"/><rect x="2" y="2" width="9" height="6" fill="#e8e8e8" stroke="#997" stroke-width="0.8"/><rect x="3.5" y="3.5" width="9" height="6" fill="#fff" stroke="#889" stroke-width="0.8"/><rect x="4" y="4" width="5" height="5" fill="#3aa83a"/></svg>
</body></html>
